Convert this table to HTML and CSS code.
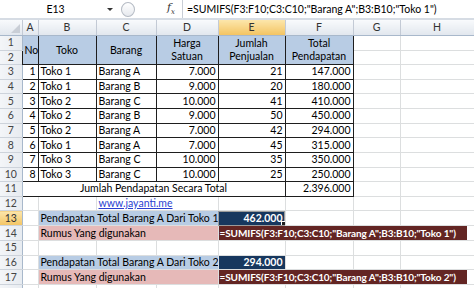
FILE: index.html
```html
<!DOCTYPE html>
<html>
<head>
<meta charset="utf-8">
<link rel="stylesheet" href="styles.css">
</head>
<body>
<div class="fbar">
  <div class="namebox"><span class="nb-text">E13</span><span class="nb-arrow"></span></div>
  <div class="fmid"><span class="knob"></span><span class="fx">f<sub>x</sub></span></div>
  <div class="formula">=SUMIFS(F3:F10;C3:C10;"Barang A";B3:B10;"Toko 1")</div>
</div>
<table class="sheet">
  <colgroup>
    <col class="c-rh"><col class="c-a"><col class="c-b"><col class="c-c"><col class="c-d"><col class="c-e"><col class="c-f"><col class="c-g"><col class="c-h">
  </colgroup>
  <thead>
    <tr class="colhdr">
      <th class="corner"><span class="tri"></span></th>
      <th>A</th><th>B</th><th>C</th><th>D</th><th class="sel">E</th><th>F</th><th>G</th><th>H</th>
    </tr>
  </thead>
  <tbody>
    <tr>
      <th class="rh">1</th>
      <td class="t hd" rowspan="2">No</td>
      <td class="t hd" rowspan="2">Toko</td>
      <td class="t hd" rowspan="2">Barang</td>
      <td class="t hd" rowspan="2">Harga<br>Satuan</td>
      <td class="t hd" rowspan="2">Jumlah<br>Penjualan</td>
      <td class="t hd" rowspan="2">Total<br>Pendapatan</td>
      <td></td><td></td>
    </tr>
    <tr><th class="rh">2</th><td></td><td></td></tr>
    <tr><th class="rh">3</th><td class="t num">1</td><td class="t">Toko 1</td><td class="t">Barang A</td><td class="t num">7.000</td><td class="t num">21</td><td class="t num">147.000</td><td></td><td></td></tr>
    <tr><th class="rh">4</th><td class="t num">2</td><td class="t">Toko 1</td><td class="t">Barang B</td><td class="t num">9.000</td><td class="t num">20</td><td class="t num">180.000</td><td></td><td></td></tr>
    <tr><th class="rh">5</th><td class="t num">3</td><td class="t">Toko 2</td><td class="t">Barang C</td><td class="t num">10.000</td><td class="t num">41</td><td class="t num">410.000</td><td></td><td></td></tr>
    <tr><th class="rh">6</th><td class="t num">4</td><td class="t">Toko 2</td><td class="t">Barang B</td><td class="t num">9.000</td><td class="t num">50</td><td class="t num">450.000</td><td></td><td></td></tr>
    <tr><th class="rh">7</th><td class="t num">5</td><td class="t">Toko 2</td><td class="t">Barang A</td><td class="t num">7.000</td><td class="t num">42</td><td class="t num">294.000</td><td></td><td></td></tr>
    <tr><th class="rh">8</th><td class="t num">6</td><td class="t">Toko 1</td><td class="t">Barang A</td><td class="t num">7.000</td><td class="t num">45</td><td class="t num">315.000</td><td></td><td></td></tr>
    <tr><th class="rh">9</th><td class="t num">7</td><td class="t">Toko 3</td><td class="t">Barang C</td><td class="t num">10.000</td><td class="t num">35</td><td class="t num">350.000</td><td></td><td></td></tr>
    <tr><th class="rh">10</th><td class="t num">8</td><td class="t">Toko 3</td><td class="t">Barang C</td><td class="t num">10.000</td><td class="t num">25</td><td class="t num">250.000</td><td></td><td></td></tr>
    <tr><th class="rh">11</th><td class="t ctr" colspan="5">Jumlah Pendapatan Secara Total</td><td class="t num">2.396.000</td><td></td><td></td></tr>
    <tr><th class="rh">12</th><td></td><td></td><td colspan="2"><span class="link">www.jayanti.me</span></td><td></td><td></td><td></td><td></td></tr>
    <tr><th class="rh sel">13</th><td></td><td class="blue" colspan="3">Pendapatan Total Barang A Dari Toko 1</td><td class="navy cur">462.000</td><td></td><td></td><td></td></tr>
    <tr><th class="rh">14</th><td></td><td class="pink" colspan="3">Rumus Yang digunakan</td><td class="redcell" colspan="4"><div class="redbar">=SUMIFS(F3:F10;C3:C10;"Barang A";B3:B10;"Toko 1")</div></td></tr>
    <tr><th class="rh">15</th><td></td><td></td><td></td><td></td><td></td><td></td><td></td><td></td></tr>
    <tr><th class="rh">16</th><td></td><td class="blue" colspan="3">Pendapatan Total Barang A Dari Toko 2</td><td class="navy">294.000</td><td></td><td></td><td></td></tr>
    <tr><th class="rh">17</th><td></td><td class="pink" colspan="3">Rumus Yang digunakan</td><td class="redcell" colspan="4"><div class="redbar">=SUMIFS(F3:F10;C3:C10;"Barang A";B3:B10;"Toko 2")</div></td></tr>
    <tr><th class="rh"></th><td></td><td></td><td></td><td></td><td></td><td></td><td></td><td></td></tr>
  </tbody>
</table>
</body>
</html>
```

FILE: styles.css
```css
* { box-sizing: border-box; }
html, body { margin: 0; padding: 0; }
body {
  width: 474px;
  height: 288px;
  overflow: hidden;
  background: #fff;
  font-family: Lato, "Open Sans", sans-serif;
  font-size: 10.5px;
  color: #000;
}

/* formula bar */
.fbar {
  display: flex;
  height: 20px;
  border-bottom: 2px solid #d6dce4;
  background: #fff;
}
.namebox {
  width: 120px;
  display: flex;
  align-items: center;
}
.nb-text { flex: 1; text-align: center; padding-left: 4px; }
.nb-arrow {
  width: 0; height: 0;
  border-left: 3px solid transparent;
  border-right: 3px solid transparent;
  border-top: 3px solid #333;
  margin-right: 7px;
}
.fmid {
  width: 62px;
  display: flex;
  align-items: center;
}
.knob {
  width: 14px; height: 15px;
  border-radius: 50%;
  border: 1px solid #b5bbc4;
  background: linear-gradient(#ffffff, #e6e9ee);
  margin-left: 1px;
}
.fx {
  margin-left: 32px;
  font-family: "DejaVu Serif", serif;
  font-style: italic;
  font-size: 11px;
  color: #333;
}
.fx sub { font-size: 7px; }
.formula {
  flex: 1;
  border-left: 1px solid #c9ced6;
  padding-left: 4px;
  display: flex;
  align-items: center;
}

/* sheet */
.sheet {
  border-collapse: collapse;
  table-layout: fixed;
  width: 474px;
}
.c-rh { width: 22px; }
.c-a { width: 16px; }
.c-b { width: 58px; }
.c-c { width: 60px; }
.c-d { width: 62px; }
.c-e { width: 67px; }
.c-f { width: 68px; }
.c-g { width: 47px; }
.c-h { width: 74px; }

.sheet td, .sheet th {
  padding: 0 2px;
  white-space: nowrap;
  overflow: hidden;
  font-weight: normal;
  border-right: 1px solid #dcdedf;
  border-bottom: 1px solid #dcdedf;
  vertical-align: middle;
  line-height: 13px;
}
.sheet tbody tr { height: 14.64px; }
.colhdr { height: 15.4px; }
.colhdr th {
  background: linear-gradient(#f8fafc, #e2e7ee);
  border-right: 1px solid #c3cad5;
  border-bottom: 1px solid #a8b8cb;
  color: #333;
  text-align: center;
}
.colhdr th.sel, th.rh.sel {
  background: linear-gradient(#fce6ab, #f3c463);
  color: #333;
}
.corner { position: relative; }
.tri {
  position: absolute;
  right: 2px; bottom: 2px;
  width: 0; height: 0;
  border-left: 9px solid transparent;
  border-bottom: 9px solid #c9ced6;
}
th.rh {
  background: linear-gradient(90deg, #f3f5f8, #e7ebf0);
  color: #444;
  text-align: center;
  border-right: 1px solid #a8b8cb;
  border-bottom: 1px solid #cdd3db;
  padding: 0;
}

.sheet td.t { border: 1px solid #1e1e1e; }
.hd {
  background: #b8cce4;
  text-align: center;
  line-height: 14.6px;
  white-space: normal;
}
.num { text-align: right; }
.ctr { text-align: center; }
.link { color: #2b3fd1; text-decoration: underline; }
.blue { background: #b8cce4; }
.pink { background: #e6b9b8; }
.navy {
  background: #17375e;
  color: #fff;
  text-align: right;
}
.sheet td.navy { font-weight: bold; }
.cur { position: relative; outline: 1px solid #9a9a9a; outline-offset: -1px; }
.cur::after {
  content: "";
  position: absolute;
  right: -2px; bottom: -2px;
  width: 4px; height: 4px;
  background: #1e1e1e;
  border: 1px solid #fff;
}
.sheet td.redcell { padding: 0; }
.redbar {
  width: 248px;
  background: #632523;
  color: #fff;
  font-weight: bold;
  font-size: 10px;
  letter-spacing: -0.1px;
  padding-left: 1px;
  line-height: 14px;
}
```
